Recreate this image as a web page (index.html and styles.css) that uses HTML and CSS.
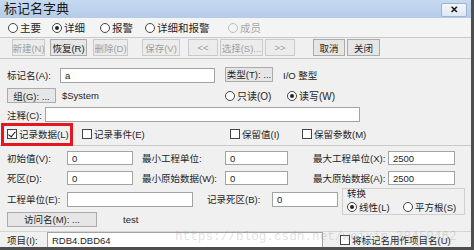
FILE: index.html
```html
<!DOCTYPE html>
<html>
<head>
<meta charset="utf-8">
<link rel="stylesheet" href="styles.css">
</head>
<body>
<div class="screen">
  <div class="dialog">
    <div class="titlebar">
      <span class="title">标记名字典</span>
      <span class="close">✕</span>
    </div>

    <div class="radios">
      <span class="radio w44"><span class="rc"></span>主要</span>
      <span class="radio w48"><span class="rc on"></span>详细</span>
      <span class="radio w45"><span class="rc"></span>报警</span>
      <span class="radio w83"><span class="rc"></span>详细和报警</span>
      <span class="radio dis"><span class="rc"></span>成员</span>
    </div>

    <div class="toolbar">
      <span class="btn b-new dis">新建(N)</span>
      <span class="btn b-restore">恢复(R)</span>
      <span class="btn b-del dis">删除(D)</span>
      <span class="btn b-save dis">保存(V)</span>
      <span class="btn b-prev dis">&lt;&lt;</span>
      <span class="btn b-sel dis">选择(S)...</span>
      <span class="btn b-next dis">&gt;&gt;</span>
      <span class="btn b-cancel">取消</span>
      <span class="btn b-close">关闭</span>
    </div>

    <div class="row row-name">
      <span class="lbl l-name">标记名(A):</span>
      <span class="input i-name">a</span>
      <span class="btn b-type">类型(T): ...</span>
      <span class="txt t-type">I/O 整型</span>
    </div>

    <div class="row row-group">
      <span class="btn b-group">组(G): ...</span>
      <span class="txt t-sys">$System</span>
      <span class="radio w62"><span class="rc"></span>只读(O)</span>
      <span class="radio"><span class="rc on"></span>读写(W)</span>
    </div>

    <div class="row row-comment">
      <span class="lbl l-comment">注释(C):</span>
      <span class="input i-comment"></span>
    </div>

    <div class="row row-checks">
      <span class="redbox"><span class="check"><span class="cb on"></span>记录数据(L)</span></span>
      <span class="check c-event"><span class="cb"></span>记录事件(E)</span>
      <span class="check c-keep"><span class="cb"></span>保留值(I)</span>
      <span class="check"><span class="cb"></span>保留参数(M)</span>
    </div>

    <div class="panel">
      <div class="row row-num first">
        <span class="lbl l-a">初始值(V):</span>
        <span class="input i-a">0</span>
        <span class="lbl l-b">最小工程单位:</span>
        <span class="input i-b">0</span>
        <span class="lbl l-c">最大工程单位(X):</span>
        <span class="input i-c">2500</span>
      </div>
      <div class="row row-num">
        <span class="lbl l-a">死区(D):</span>
        <span class="input i-a">0</span>
        <span class="lbl l-b">最小原始数据(W):</span>
        <span class="input i-b">0</span>
        <span class="lbl l-c">最大原始数据(A):</span>
        <span class="input i-c">2500</span>
      </div>
      <div class="row row-units">
        <span class="lbl l-a">工程单位(E):</span>
        <span class="input i-units"></span>
        <span class="lbl l-dead">记录死区(B):</span>
        <span class="input i-dead">0</span>
        <div class="groupbox">
          <span class="gb-title">转换</span>
          <div class="gb-radios">
            <span class="radio w56"><span class="rc on"></span>线性(L)</span>
            <span class="radio"><span class="rc"></span>平方根(S)</span>
          </div>
        </div>
      </div>
      <div class="row row-access">
        <span class="btn b-access">访问名(M): ...</span>
        <span class="txt t-test">test</span>
      </div>
    </div>

    <div class="row row-item">
      <span class="lbl l-item">项目(I):</span>
      <span class="input i-item">RDB4.DBD64</span>
      <span class="check c-use"><span class="cb"></span>将标记名用作项目名(U)</span>
    </div>

    <div class="watermark">https://blog.csdn.net/weixin_38450462</div>
  </div>
</div>
</body>
</html>
```

FILE: styles.css
```css
* { box-sizing: border-box; }
html, body { margin: 0; padding: 0; }
body {
  width: 474px;
  height: 250px;
  overflow: hidden;
  font-family: "Liberation Sans", "Noto Sans CJK SC", sans-serif;
  font-size: 9.5px;
  color: #1e1e1e;
}
.screen {
  width: 474px;
  height: 250px;
  background: #4e4e4e;
}
.dialog {
  position: relative;
  width: 471px;
  height: 247px;
  background: #f0f0f0;
  overflow: hidden;
}
.titlebar {
  height: 18px;
  background: linear-gradient(#c6daf0, #b4cce8);
  display: flex;
  align-items: center;
  justify-content: space-between;
  padding: 0 4px 0 4px;
}
.title { font-size: 13px; color: #1a1a1a; line-height: 18px; }
.close {
  width: 26px;
  height: 14px;
  margin-top: 1px;
  background: linear-gradient(#f4f7fb, #dde7f3);
  border: 1px solid #9eb3cc;
  border-radius: 2px;
  font-size: 10px;
  font-weight: bold;
  line-height: 12px;
  text-align: center;
  color: #111;
}
.radios {
  height: 19px;
  display: flex;
  align-items: center;
  padding-left: 8px;
  background: #f4f4f4;
  font-size: 10.5px;
}
.radio { display: inline-flex; align-items: center; white-space: nowrap; }
.rc {
  width: 10px;
  height: 10px;
  border: 1px solid #444;
  border-radius: 50%;
  background: #fff;
  margin-right: 2px;
  position: relative;
  flex: none;
}
.rc.on::after {
  content: "";
  position: absolute;
  left: 2px; top: 2px;
  width: 4px; height: 4px;
  border-radius: 50%;
  background: #222;
}
.radio.dis { color: #a8a8a8; }
.radio.dis .rc { border-color: #bdbdbd; background: #f4f4f4; }
.w44 { width: 44px; }
.w48 { width: 48px; }
.w45 { width: 45px; }
.w83 { width: 83px; }
.w62 { width: 62px; }
.w56 { width: 56px; }

.toolbar {
  height: 22px;
  border-top: 1px solid #c9c9c9;
  border-bottom: 1px solid #c9c9c9;
  display: flex;
  align-items: center;
  padding-bottom: 1px;
}
.btn {
  display: inline-flex;
  align-items: center;
  justify-content: center;
  height: 17px;
  background: #e6e6e6;
  border: 1px solid #ababab;
  white-space: nowrap;
  flex: none;
}
.btn.dis { color: #9e9e9e; border-color: #cacaca; background: #ececec; }
.b-new { margin-left: 12px; width: 33px; }
.b-restore { margin-left: 5px; width: 37px; }
.b-del { margin-left: 6px; width: 35px; }
.b-save { margin-left: 14px; width: 38px; }
.b-prev { margin-left: 8px; width: 30px; }
.b-sel { margin-left: 2px; width: 43px; }
.b-next { margin-left: 2px; width: 30px; }
.b-cancel { margin-left: 18px; width: 32px; }
.b-close { margin-left: 2px; width: 33px; }

.row { display: flex; align-items: center; }
.lbl, .txt { white-space: nowrap; flex: none; }
.input {
  display: inline-flex;
  align-items: center;
  height: 15px;
  background: #fff;
  border: 1px solid #a3a3a3;
  padding-left: 4px;
  flex: none;
  white-space: nowrap;
}

.row-name { height: 20px; margin-top: 6px; }
.l-name { width: 60px; padding-left: 7px; }
.i-name { width: 155px; }
.b-type { margin-left: 10px; width: 48px; height: 15px; margin-bottom: 2px; }
.t-type { margin-left: 10px; }

.row-group { height: 17px; margin-top: 2px; }
.b-group { margin-left: 7px; width: 49px; height: 15px; }
.t-sys { margin-left: 6px; width: 163px; }
.row-group .radio { font-size: 10px; }

.row-comment { height: 17px; margin-top: 2px; }
.l-comment { width: 45px; padding-left: 7px; }
.i-comment { width: 315px; }

.row-checks { height: 22px; }
.redbox {
  display: inline-flex;
  align-items: center;
  width: 72px;
  height: 23px;
  margin-left: 1px;
  border: 3px solid #e5161d;
  padding-left: 3px;
  flex: none;
}
.check { display: inline-flex; align-items: center; white-space: nowrap; flex: none; }
.cb {
  width: 10px;
  height: 10px;
  border: 1px solid #444;
  background: #fff;
  margin-right: 2px;
  position: relative;
  flex: none;
}
.cb.on::after {
  content: "";
  position: absolute;
  left: 2px; top: 0px;
  width: 3px; height: 6px;
  border: solid #111;
  border-width: 0 1.5px 1.5px 0;
  transform: rotate(40deg);
}
.c-event { margin-left: 9px; width: 148px; }
.c-keep { width: 72px; }

.panel {
  border-top: 1px solid #c9c9c9;
  border-bottom: 1px solid #d4d4d4;
  height: 87px;
}
.row-num { height: 20px; }
.row-num.first { margin-top: 2px; }
.l-a { width: 67px; padding-left: 7px; }
.i-a { width: 66px; height: 14px; }
.l-b { width: 92px; padding-left: 9px; }
.i-b { width: 63px; height: 14px; }
.l-c { width: 100px; padding-left: 25px; }
.i-c { width: 67px; height: 14px; }

.row-units { height: 19px; margin-top: 4px; align-items: flex-start; }
.row-units .lbl { line-height: 15px; }
.i-units { width: 126px; }
.l-dead { width: 79px; padding-left: 14px; }
.i-dead { width: 66px; }
.groupbox {
  margin-left: 4px;
  margin-top: -4px;
  width: 123px;
  height: 27px;
  border: 1px solid #cfcfcf;
  padding-left: 4px;
  flex: none;
}
.gb-title { display: block; line-height: 11px; margin-top: -1px; }
.gb-radios { display: flex; align-items: center; margin-top: 1px; }

.row-access { height: 16px; }
.b-access { margin-left: 7px; width: 90px; height: 15px; }
.t-test { margin-left: 26px; }

.row-item { height: 16px; }
.l-item { width: 47px; padding-left: 7px; }
.i-item { width: 276px; height: 16px; }
.c-use { margin-left: 17px; }

.watermark {
  position: absolute;
  left: 175px;
  top: 229px;
  font-family: "Liberation Mono", monospace;
  font-size: 12.7px;
  color: rgba(150, 150, 150, 0.3);
  white-space: nowrap;
  pointer-events: none;
}
```
